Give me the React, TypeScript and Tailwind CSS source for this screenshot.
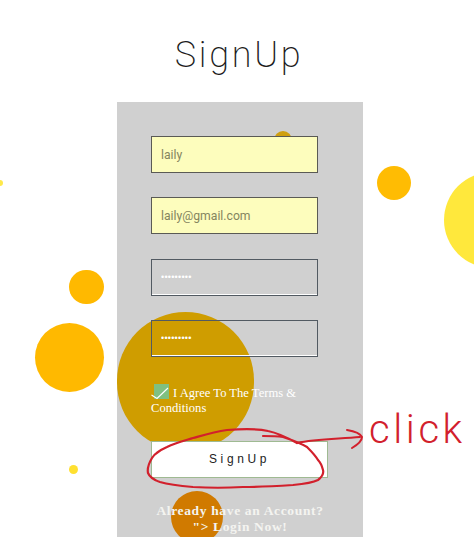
import React from "react";

const circles = [
  "left-[-3px] top-[180px] w-[6px] h-[6px] bg-[#ffe94a]",
  "left-[444px] top-[172px] w-[96px] h-[96px] bg-[#ffe83c]",
  "left-[377px] top-[166px] w-[34px] h-[34px] bg-[#ffbc03]",
  "left-[69px] top-[270px] w-[35px] h-[34px] bg-[#ffb900]",
  "left-[35px] top-[323px] w-[69px] h-[69px] bg-[#ffb900]",
  "left-[69px] top-[465px] w-[9px] h-[9px] bg-[#ffe030]",
  "left-[274px] top-[131px] w-[18px] h-[18px] bg-[#cf9f10]",
  "left-[117px] top-[312px] w-[137px] h-[139px] bg-[#cf9d00]",
  "left-[171px] top-[491px] w-[52px] h-[52px] bg-[#d07a00]",
];

function Field({ value, type = "text" }: { value: string; type?: string }) {
  const filled = type === "text";
  return (
    <input
      readOnly
      type={type}
      value={value}
      className={
        filled
          ? "block w-[167px] h-[37px] border border-[#5a5a55] bg-[#fdfdbd] pl-[9px] text-[12.2px] text-[#85855f] outline-none font-['Roboto',sans-serif]"
          : "block w-[167px] h-[37px] border border-[#525a62] bg-transparent pl-[9px] text-[9px] tracking-[0.25px] text-white outline-none shadow-[inset_0_-1px_0_#ffffff] font-['Liberation_Sans',sans-serif]"
      }
    />
  );
}

export default function App() {
  return (
    <div className="relative w-[474px] h-[537px] overflow-hidden bg-white">
      <h1 className="h-[102px] pl-[4px] pt-[8px] flex items-center justify-center text-[36px] font-extralight tracking-[2.7px] text-[#1c1c1c] font-['Roboto',sans-serif]">
        SignUp
      </h1>

      <div className="ml-[117px] w-[246px] h-[435px] bg-[#d0d0d0]" />

      {circles.map((c) => (
        <div key={c} className={"absolute rounded-full " + c} />
      ))}

      <div className="absolute left-[151px] top-[136px] w-[190px]">
        <div className="flex flex-col gap-[24.33px]">
          <Field value="laily" />
          <Field value="laily@gmail.com" />
          <Field value="•••••••••" type="password" />
          <Field value="•••••••••" type="password" />
        </div>

        <div className="relative mt-[27px] w-[160px] text-[12.6px] leading-[15px] text-white font-['Liberation_Serif',serif]">
          <span className="inline-block w-[15px] h-[15px] ml-[3px] mr-[4px] align-[-2px] bg-[#7fc081]" />
          I Agree To The Terms &amp; Conditions
          <svg className="absolute left-0 top-[-2px]" width="20" height="18" viewBox="0 0 20 18" fill="none">
            <path d="M0.5 13 L6 16.5 L17 6" stroke="#ffffff" strokeWidth="1.1" />
          </svg>
        </div>

        <button className="block mt-[25px] w-[177px] h-[37px] bg-white border border-[#9fba92] text-[12px] tracking-[3.6px] text-[#222] font-['Liberation_Sans',sans-serif]">
          SignUp
        </button>

        <p className="mt-[25px] ml-[-34px] w-[246px] text-center text-[13.5px] leading-[16px] tracking-[0.65px] font-bold text-[#f4f4f0] font-['Liberation_Serif',serif]">
          Already have an Account?
          <br />
          "&gt; Login Now!
        </p>
      </div>

      <svg className="absolute left-0 top-0" width="474" height="537" viewBox="0 0 474 537" fill="none">
        <path
          d="M297 443 C288 438 278 433 268 431 C255 428 240 429 227 430 C214 432 204 435 193 438 C183 441 175 443 167 447 C160 450 155 453 152 458 C149 463 147 468 148 473 C150 478 154 480 160 482 C170 485 181 486 193 487 C210 488 226 488 243 487 C260 487 277 486 293 485 C303 484 312 483 318 480 C322 477 324 474 323 470 C322 466 321 463 318 460 C315 455 311 451 307 447 C300 443 292 440 283 437 C276 436 269 436 263 436"
          stroke="#d2202c"
          strokeWidth="2.2"
          strokeLinecap="round"
        />
        <path d="M297 443 C315 439 338 439 360 437" stroke="#d2202c" strokeWidth="2" strokeLinecap="round" />
        <path d="M347 430 C353 431 360 433 362 437 C362 441 357 445 352 448" stroke="#d2202c" strokeWidth="2" strokeLinecap="round" />
      </svg>

      <span className="absolute left-[369px] top-[404px] text-[40px] leading-[52px] font-light tracking-[3.6px] text-[#d2202c] font-['Roboto',sans-serif]">
        click
      </span>
    </div>
  );
}
